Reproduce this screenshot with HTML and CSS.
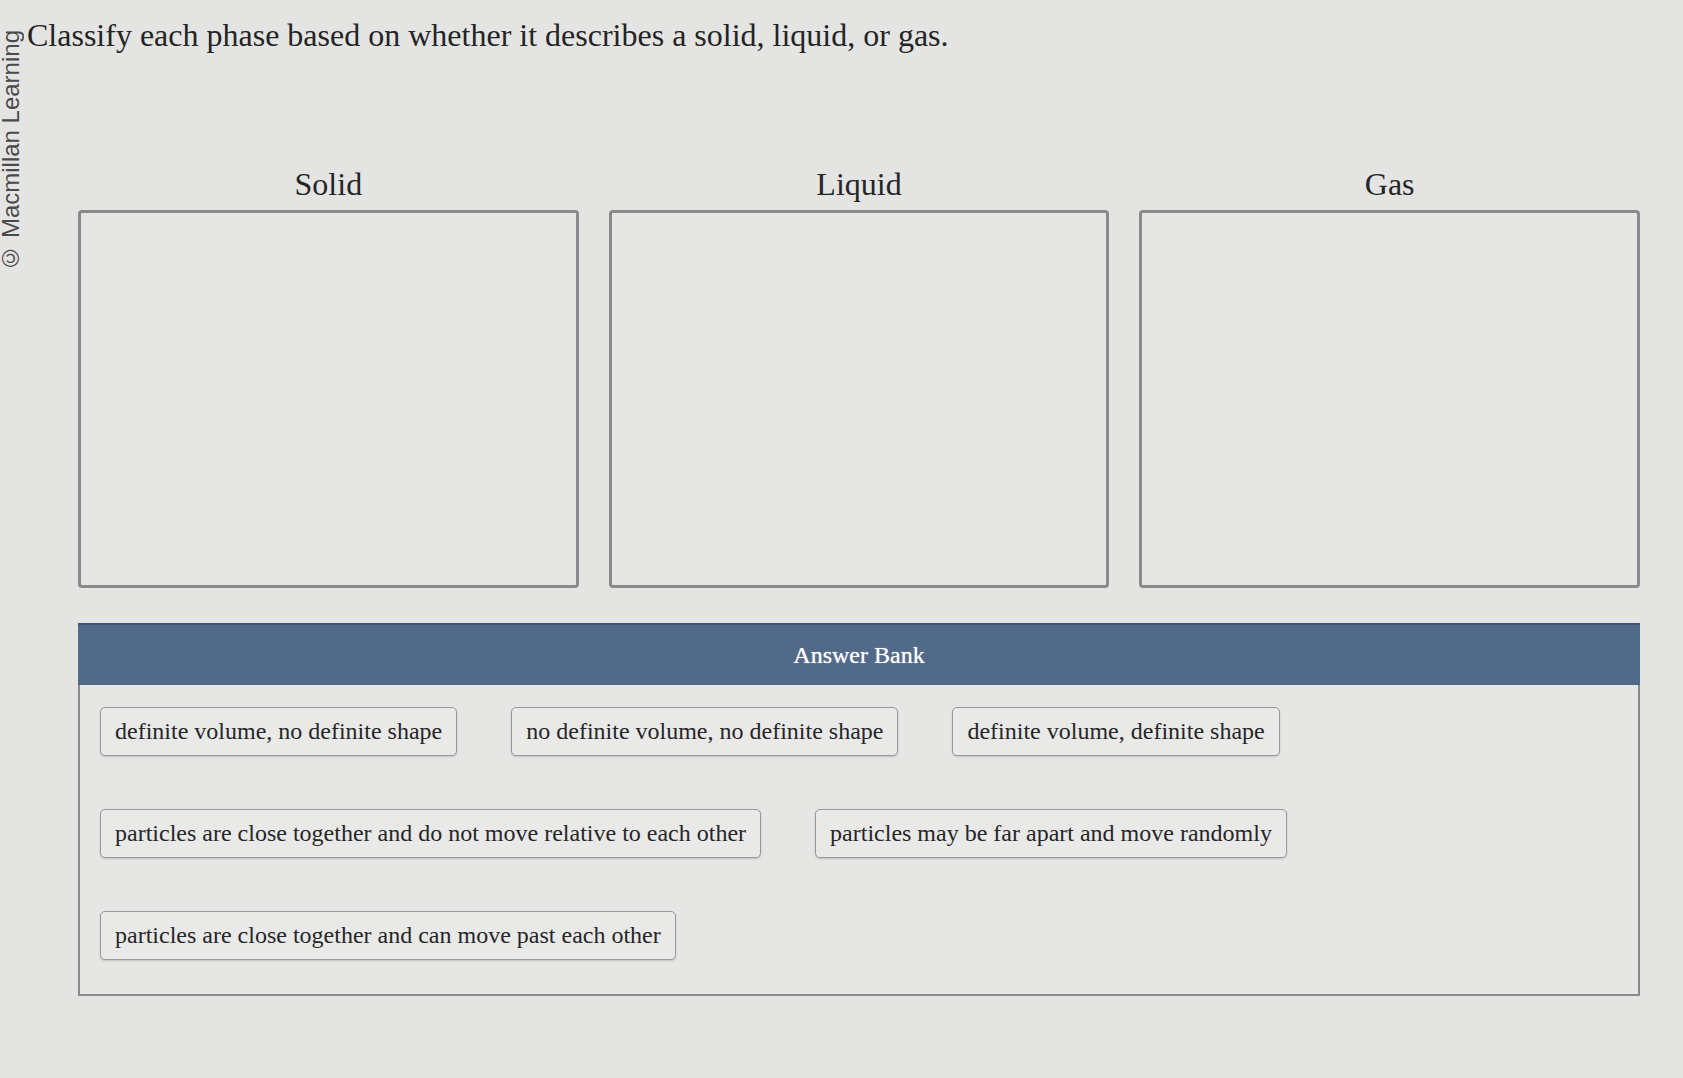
FILE: index.html
```html
<!DOCTYPE html>
<html lang="en">
<head>
<meta charset="utf-8">
<title>Classify each phase</title>
<link rel="stylesheet" href="styles.css">
</head>
<body>
<div class="page">
  <div class="credit"><span class="credit-text">© Macmillan Learning</span></div>
  <main class="main">
    <h1 class="prompt">Classify each phase based on whether it describes a solid, liquid, or gas.</h1>
    <div class="workspace">
      <div class="bins">
        <div class="bin">
          <div class="bin-label">Solid</div>
          <div class="bin-box"></div>
        </div>
        <div class="bin">
          <div class="bin-label">Liquid</div>
          <div class="bin-box"></div>
        </div>
        <div class="bin">
          <div class="bin-label">Gas</div>
          <div class="bin-box"></div>
        </div>
      </div>
      <section class="bank">
        <div class="bank-head">Answer Bank</div>
        <div class="bank-body">
          <div class="chip">definite volume, no definite shape</div>
          <div class="chip">no definite volume, no definite shape</div>
          <div class="chip">definite volume, definite shape</div>
          <div class="chip">particles are close together and do not move relative to each other</div>
          <div class="chip">particles may be far apart and move randomly</div>
          <div class="chip">particles are close together and can move past each other</div>
        </div>
      </section>
    </div>
  </main>
</div>
</body>
</html>
```
FILE: styles.css
```css
html, body {
  margin: 0;
  padding: 0;
}
body {
  background: #e4e4e2;
  color: #262628;
  font-family: "Liberation Serif", "Times New Roman", serif;
  height: 1078px;
  overflow: hidden;
}
.page {
  display: flex;
  align-items: flex-start;
}
.credit {
  width: 24px;
  flex: none;
  padding-top: 30px;
  display: flex;
  justify-content: flex-start;
}
.credit-text {
  writing-mode: vertical-rl;
  transform: rotate(180deg);
  font-family: "Liberation Sans", Arial, sans-serif;
  font-size: 24px;
  line-height: 22px;
  color: #4a4a4c;
  white-space: nowrap;
}
.main {
  flex: 1;
  padding-left: 3px;
}
.prompt {
  margin: 15px 0 0 0;
  font-size: 32px;
  line-height: 40px;
  font-weight: normal;
  color: #242426;
}
.workspace {
  margin-left: 51px;
  width: 1562px;
}
.bins {
  display: flex;
  gap: 30px;
  margin-top: 109px;
}
.bin {
  flex: 1;
  display: flex;
  flex-direction: column;
}
.bin-label {
  text-align: center;
  font-size: 32px;
  line-height: 40px;
  color: #262628;
  margin-bottom: 6px;
}
.bin-box {
  height: 372px;
  border: 3px solid #8a8a8e;
  border-radius: 4px;
  background: #e6e6e4;
}
.bank {
  margin-top: 35px;
}
.bank-head {
  background: #526a89;
  border-top: 2px solid #3e5470;
  color: #ffffff;
  text-align: center;
  font-size: 24px;
  line-height: 60px;
  height: 60px;
  text-shadow: 0 0 1px rgba(255,255,255,0.7);
}
.bank-body {
  border: 2px solid #8a8a8e;
  border-top: none;
  background: #e6e6e4;
  padding: 22px 22px 37px 20px;
  display: flex;
  flex-wrap: wrap;
  column-gap: 54px;
  row-gap: 53px;
  height: 250px;
  box-sizing: content-box;
  align-content: flex-start;
}
.chip {
  height: 47px;
  line-height: 47px;
  padding: 0 14px;
  font-size: 24px;
  color: #262628;
  background: #e9e9e8;
  border: 1.5px solid #99999c;
  border-radius: 5px;
  box-shadow: 0 1px 2px rgba(0, 0, 0, 0.18);
  white-space: nowrap;
}
```
